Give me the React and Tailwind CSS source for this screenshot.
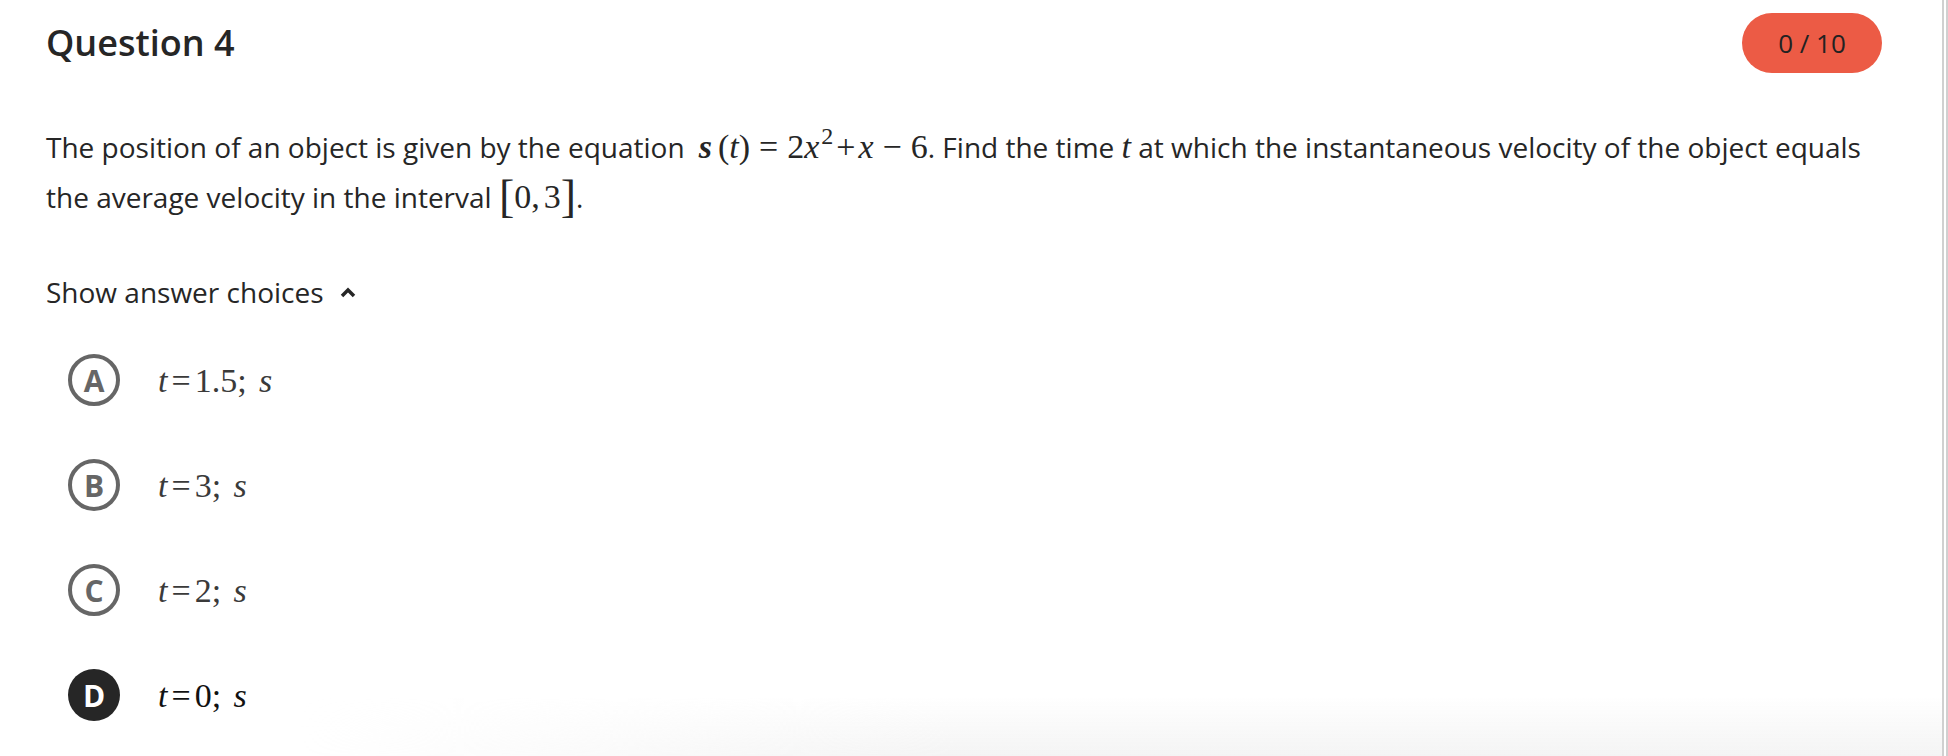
import React from "react";

const sans = { fontFamily: '"Open Sans", "Noto Sans", sans-serif' };

const Choice = ({ letter, value, selected }) => (
  <div className="flex items-center h-[56px]">
    <div
      className={
        selected
          ? "ml-[22px] w-[52px] h-[52px] rounded-full bg-[#262626] text-white flex items-center justify-center text-[30px] font-bold"
          : "ml-[22px] w-[52px] h-[52px] rounded-full border-[4px] border-[#666666] text-[#666666] flex items-center justify-center text-[30px] font-bold"
      }
    >
      {letter}
    </div>
    <div
      className={
        "ml-[38px] font-['Liberation_Serif',serif] text-[34px] " +
        (selected ? "text-[#111111]" : "text-[#3a3a3a]")
      }
    >
      <i>t</i>
      <span className="mx-[4px]">=</span>
      {value}; <i className="ml-[4px]">s</i>
    </div>
  </div>
);

const App = () => {
  return (
    <div className="relative w-[1948px] h-[756px] overflow-hidden bg-white flex text-[#262626]" style={sans}>
      <div className="flex-1 pl-[46px] pr-[60px]">
        {/* header */}
        <div className="mt-[13px] h-[60px] flex items-center justify-between">
          <h1 className="text-[36px] font-semibold">Question 4</h1>
          <div className="w-[140px] h-[60px] rounded-full bg-[#ec5b45] flex items-center justify-center text-[26px] text-[#222222]">
            0 / 10
          </div>
        </div>

        {/* question */}
        <div className="mt-[49px] text-[28px] leading-[50px]">
          <div className="whitespace-nowrap">
            The position of an object is given by the equation
            <span className="ml-[14px] font-['Liberation_Serif',serif] text-[34px] leading-none">
              <i className="font-bold">s</i>
              <span className="ml-[6px]">(</span>
              <i>t</i>)<span className="mx-[9px]">=</span>2<i>x</i>
              <sup className="text-[24px] top-[-14px] ml-[2px]">2</sup>
              <span className="mx-[3px]">+</span>
              <i>x</i>
              <span className="mx-[9px]">−</span>6
            </span>
            . Find the time <i className="font-['Liberation_Serif',serif] text-[34px] leading-none">t</i> at which the instantaneous velocity of the object equals
          </div>
          <div className="whitespace-nowrap">
            the average velocity in the interval{" "}
            <span className="font-['Liberation_Serif',serif] text-[34px] leading-none">
              <span className="text-[46px] align-[-4px]">[</span>0,<span className="ml-[4px]">3</span>
              <span className="text-[46px] align-[-4px]">]</span>
            </span>
            .
          </div>
        </div>

        {/* show answer choices */}
        <div className="mt-[50px] h-[40px] flex items-center text-[28px]">
          Show answer choices
          <svg className="ml-[16px]" width="16" height="11" viewBox="0 0 16 11">
            <polyline points="2,9 8,3 14,9" fill="none" stroke="#262626" strokeWidth="3.5" />
          </svg>
        </div>

        {/* choices */}
        <div className="mt-[40px] flex flex-col gap-[49px]">
          <Choice letter="A" value="1.5" />
          <Choice letter="B" value="3" />
          <Choice letter="C" value="2" />
          <Choice letter="D" value="0" selected />
        </div>
      </div>

      {/* scrollbar edge */}
      <div className="w-[6px] flex">
        <div className="w-[2px] bg-[#d0d0d0]" />
        <div className="w-[2px] bg-white" />
        <div className="w-[2px] bg-[#d0d0d0]" />
      </div>

      {/* faint footer shadow */}
      <div className="absolute left-[300px] right-[6px] bottom-0 h-[60px] bg-gradient-to-b from-transparent to-[#f4f4f4] [mask-image:linear-gradient(to_right,transparent,black_40%)] pointer-events-none" />
    </div>
  );
};

export default App;
